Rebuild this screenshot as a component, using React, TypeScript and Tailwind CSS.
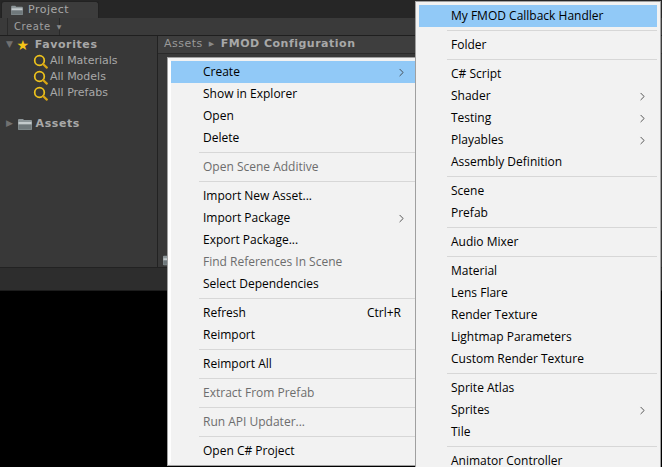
import { ChevronRight } from "lucide-react";

type MenuEntry = { label?: string; sep?: boolean; sub?: boolean; off?: boolean; hot?: boolean; key?: string };

const mainMenu: MenuEntry[] = [
  { label: "Create", sub: true, hot: true },
  { label: "Show in Explorer" },
  { label: "Open" },
  { label: "Delete" },
  { sep: true },
  { label: "Open Scene Additive", off: true },
  { sep: true },
  { label: "Import New Asset..." },
  { label: "Import Package", sub: true },
  { label: "Export Package..." },
  { label: "Find References In Scene", off: true },
  { label: "Select Dependencies" },
  { sep: true },
  { label: "Refresh", key: "Ctrl+R" },
  { label: "Reimport" },
  { sep: true },
  { label: "Reimport All" },
  { sep: true },
  { label: "Extract From Prefab", off: true },
  { sep: true },
  { label: "Run API Updater...", off: true },
  { sep: true },
  { label: "Open C# Project" },
];

const createMenu: MenuEntry[] = [
  { label: "My FMOD Callback Handler", hot: true },
  { sep: true },
  { label: "Folder" },
  { sep: true },
  { label: "C# Script" },
  { label: "Shader", sub: true },
  { label: "Testing", sub: true },
  { label: "Playables", sub: true },
  { label: "Assembly Definition" },
  { sep: true },
  { label: "Scene" },
  { label: "Prefab" },
  { sep: true },
  { label: "Audio Mixer" },
  { sep: true },
  { label: "Material" },
  { label: "Lens Flare" },
  { label: "Render Texture" },
  { label: "Lightmap Parameters" },
  { label: "Custom Render Texture" },
  { sep: true },
  { label: "Sprite Atlas" },
  { label: "Sprites", sub: true },
  { label: "Tile" },
  { sep: true },
  { label: "Animator Controller" },
];

function MenuList({ items }: { items: MenuEntry[] }) {
  return (
    <div className="flex flex-col">
      {items.map((item, i) =>
        item.sep ? (
          <div key={i} className="h-[7px] flex items-center pl-[28px]">
            <div className="h-px w-full bg-[#d7d7d7]" />
          </div>
        ) : (
          <div
            key={i}
            className={`h-[22px] flex items-center pl-[32px] pr-[8px] ${item.hot ? "bg-[#91c9f7]" : ""} ${
              item.off ? "text-[#6d6d6d]" : "text-black"
            }`}
          >
            <span className="flex-1 whitespace-nowrap">{item.label}</span>
            {item.key && <span className="mr-[7px]">{item.key}</span>}
            {item.sub && <ChevronRight size={13} strokeWidth={1.5} className="text-[#333333]" />}
          </div>
        )
      )}
    </div>
  );
}

function FolderIcon({ className }: { className?: string }) {
  return (
    <svg viewBox="0 0 14 12" className={className}>
      <path d="M0 2 Q0 1 1 1 H5 L6 2 H13 Q14 2 14 3 V11 Q14 12 13 12 H1 Q0 12 0 11 Z" fill="#8d9699" />
      <rect x="0.5" y="4" width="13" height="2.5" fill="#c3cacc" />
      <rect x="0.5" y="6.5" width="13" height="5" fill="#6f787b" />
    </svg>
  );
}

function SearchIcon() {
  return (
    <svg viewBox="0 0 15 15" className="w-[15px] h-[15px] shrink-0">
      <circle cx="6.5" cy="6.5" r="4.8" fill="none" stroke="#eec31d" strokeWidth="1.7" />
      <path d="M10 10 L13.8 13.6" stroke="#d9a514" strokeWidth="2.2" strokeLinecap="round" />
    </svg>
  );
}

function FavoriteRow({ label }: { label: string }) {
  return (
    <div className="h-[16px] flex items-center pl-[32px] gap-[2px] text-[#a8a8a8]">
      <SearchIcon />
      <span>{label}</span>
    </div>
  );
}

export default function App() {
  return (
    <div className="relative w-[662px] h-[467px] bg-black overflow-hidden font-['DejaVu_Sans',sans-serif] text-[11px]">
      {/* Unity project window */}
      <div className="h-[291px] flex flex-col bg-[#2b2b2b]">
        <div className="h-[18px] flex items-end bg-[#262626]">
          <div className="ml-[1px] w-[98px] h-[17px] flex items-center gap-[5px] pl-[9px] rounded-t-[3px] bg-[#3c3c3c] border border-b-0 border-[#222222] text-[#a8a8a8] tracking-[0.5px]">
            <FolderIcon className="w-[12px] h-[10px]" />
            <span>Project</span>
          </div>
        </div>
        <div className="h-[18px] flex bg-[#3a3a3a] border-b border-[#1f1f1f] pl-[7px]">
          <div className="w-[53px] flex items-center gap-[6px] pl-[6px] border-x border-[#2a2a2a] text-[#a0a0a0] text-[10px] tracking-[0.6px]">
            <span>Create</span>
            <span className="text-[6px] text-[#8a8a8a]">▼</span>
          </div>
        </div>
        <div className="h-[232px] flex bg-[#383838] border-b border-[#222222]">
          <div className="w-[158px] shrink-0 border-r border-[#222222] pt-[1px] pl-[1px] flex flex-col">
            <div className="h-[16px] flex items-center pl-[5px] gap-[2px] font-bold text-[#a8a8a8] tracking-[0.6px]">
              <span className="text-[9px] text-[#707070] mr-[1px]">▼</span>
              <span className="text-[14px] leading-none text-[#f5c518] mr-[3px]">★</span>
              <span>Favorites</span>
            </div>
            <FavoriteRow label="All Materials" />
            <FavoriteRow label="All Models" />
            <FavoriteRow label="All Prefabs" />
            <div className="h-[16px] mt-[15px] flex items-center pl-[5px] gap-[4px] font-bold text-[#a8a8a8] tracking-[0.6px]">
              <span className="text-[9px] text-[#707070]">▶</span>
              <FolderIcon className="w-[14px] h-[12px]" />
              <span>Assets</span>
            </div>
          </div>
          <div className="flex-1 flex flex-col">
            <div className="h-[18px] flex items-center pl-[6px] gap-[6px] bg-[#3e3e3e] border-b border-[#2a2a2a] text-[#999999] tracking-[0.5px]">
              <span>Assets</span>
              <span className="text-[7px] text-[#888888]">▶</span>
              <span className="font-bold text-[#a8a8a8]">FMOD Configuration</span>
            </div>
            <div className="flex-1 flex items-end pl-[5px] pb-[1px]">
              <FolderIcon className="w-[12px] h-[12px]" />
            </div>
          </div>
        </div>
        <div className="flex-1 bg-[#2d2d2d] border-b border-[#1c1c1c]" />
      </div>

      {/* context menus */}
      <div className="absolute left-[168px] top-[58px] w-[251px] bg-[#f2f2f2] border-[3px] border-[#f2f2f2] border-l-white/90 outline outline-[#a0a0a0] font-['Open_Sans',sans-serif] text-[12px]">
        <MenuList items={mainMenu} />
      </div>
      <div className="absolute left-[416px] top-[2px] w-[244px] bg-[#f2f2f2] border-[3px] border-[#f2f2f2] outline outline-[#a0a0a0] font-['Open_Sans',sans-serif] text-[12px]">
        <MenuList items={createMenu} />
      </div>
    </div>
  );
}
